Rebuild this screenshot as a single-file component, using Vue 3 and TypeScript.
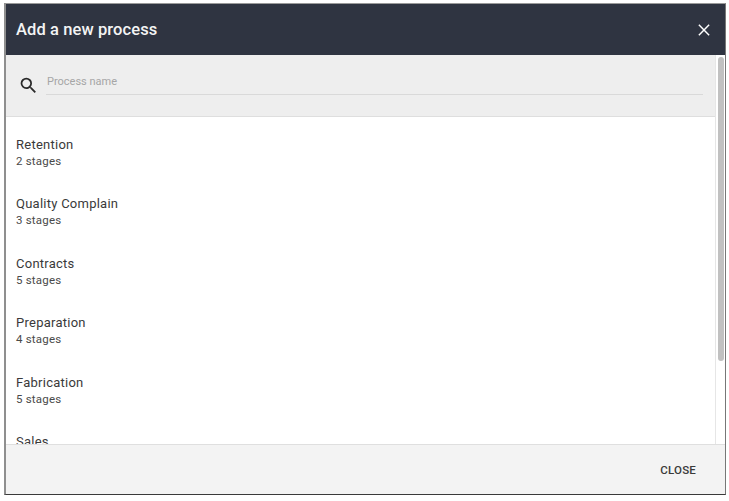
<script setup lang="ts">
const processes = [
  { name: 'Retention', stages: 2 },
  { name: 'Quality Complain', stages: 3 },
  { name: 'Contracts', stages: 5 },
  { name: 'Preparation', stages: 4 },
  { name: 'Fabrication', stages: 5 },
  { name: 'Sales', stages: 3 },
]
</script>

<template>
  <div class="page">
    <div class="modal">
      <header class="head">
        <h1 class="title">Add a new process</h1>
        <svg class="close-x" viewBox="0 0 14 14" width="12" height="12">
          <path d="M1 1L13 13M13 1L1 13" stroke="#fff" stroke-width="1.7" fill="none" />
        </svg>
      </header>
      <div class="middle">
        <div class="content">
          <div class="search">
            <svg class="lens" viewBox="0 0 24 24" width="21" height="21">
              <path d="M15.5 14h-.79l-.28-.27A6.47 6.47 0 0 0 16 9.5 6.5 6.5 0 1 0 9.5 16c1.61 0 3.09-.59 4.23-1.57l.27.28v.79l5 4.99L20.49 19l-4.99-5zm-6 0C7.01 14 5 11.99 5 9.5S7.01 5 9.5 5 14 7.01 14 9.5 11.99 14 9.5 14z" fill="#2a2a2a" />
            </svg>
            <div class="field">Process name</div>
          </div>
          <ul class="list">
            <li v-for="p in processes" :key="p.name" class="item">
              <div class="name">{{ p.name }}</div>
              <div class="stages">{{ p.stages }} stages</div>
            </li>
          </ul>
        </div>
        <div class="track"><div class="thumb"></div></div>
      </div>
      <footer class="foot"><span class="close-btn">CLOSE</span></footer>
    </div>
  </div>
</template>

<style scoped>
.page {
  width: 729px;
  height: 501px;
  padding: 3px 3px 6px 4px;
  box-sizing: border-box;
  background: #fff;
  font-family: Roboto, "Liberation Sans", sans-serif;
  overflow: hidden;
}
.modal {
  height: 100%;
  display: flex;
  flex-direction: column;
  box-sizing: border-box;
  border: 1px solid #8f8f8f;
  border-left-width: 2px;
  border-top-color: #9a9a9a;
  border-bottom-color: #3a3a3a;
  border-right-color: #777;
  background: #fff;
}
.head {
  height: 51px;
  flex: none;
  background: #2f3441;
  display: flex;
  align-items: center;
  justify-content: space-between;
  padding: 0 15px 0 10px;
}
.title {
  margin: 0;
  color: #f4f4f4;
  font-size: 16.5px;
  font-weight: 500;
  letter-spacing: 0.1px;
}
.middle {
  flex: 1;
  min-height: 0;
  display: flex;
}
.content {
  flex: 1;
  min-width: 0;
  overflow: hidden;
  display: flex;
  flex-direction: column;
}
.search {
  height: 62px;
  flex: none;
  box-sizing: border-box;
  background: #eeeeee;
  border-bottom: 1px solid #dedede;
  display: flex;
  align-items: flex-start;
  padding: 17px 12px 0 12px;
  gap: 7px;
}
.lens {
  margin-top: 3px;
  flex: none;
}
.field {
  flex: 1;
  height: 22px;
  color: #a6a6a6;
  font-size: 11px;
  line-height: 20px;
  padding-left: 1px;
  border-bottom: 1px solid #d9d9d9;
}
.list {
  list-style: none;
  margin: 0;
  padding: 0;
}
.item {
  height: 59.4px;
  padding: 19px 0 0 10px;
  box-sizing: border-box;
}
.name {
  font-size: 13px;
  line-height: 17px;
  color: #3a3a3a;
  letter-spacing: 0.25px;
}
.stages {
  font-size: 11.5px;
  line-height: 16px;
  color: #4a4a4a;
  letter-spacing: 0.2px;
}
.track {
  width: 10px;
  flex: none;
  box-sizing: border-box;
  border-left: 1px solid #e6e6e6;
  background: #fff;
  padding: 2px 1px 0 2px;
}
.thumb {
  height: 304px;
  background: #c1c1c1;
  border-radius: 3px;
}
.foot {
  height: 50px;
  flex: none;
  box-sizing: border-box;
  background: #f3f3f3;
  border-top: 1px solid #dfdfdf;
  display: flex;
  align-items: center;
  justify-content: flex-end;
  padding: 1px 29px 0 0;
}
.close-btn {
  font-size: 11.5px;
  font-weight: 500;
  color: #3a3a3a;
  letter-spacing: 0.2px;
}
</style>
